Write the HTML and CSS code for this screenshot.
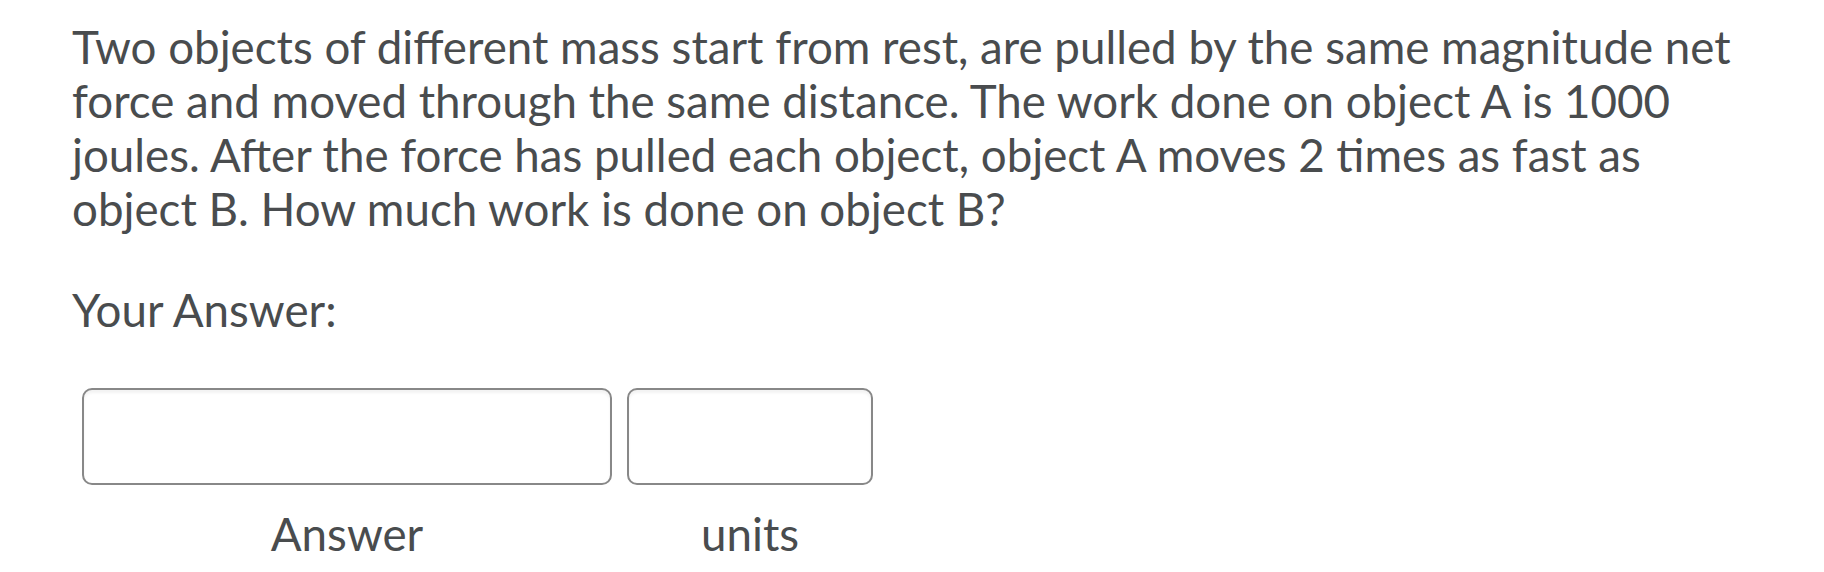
FILE: index.html
```html
<!DOCTYPE html>
<html lang="en">
<head>
    <meta charset="UTF-8">
    <title>Question</title>
    <link rel="stylesheet" href="styles.css">
</head>
<body>
    <div class="question">
        <p class="question-text">Two objects of different mass start from rest, are pulled by the same magnitude net force and moved through the same distance. The work done on object A is 1000 joules. After the force has pulled each object, object A moves 2 times as fast as object B. How much work is done on object B?</p>

        <p class="answer-title">Your Answer:</p>

        <div class="fields">
            <div class="field field-answer">
                <input type="text" class="field-input" aria-label="Answer">
                <span class="field-label">Answer</span>
            </div>
            <div class="field field-units">
                <input type="text" class="field-input" aria-label="units">
                <span class="field-label">units</span>
            </div>
        </div>
    </div>
</body>
</html>
```

FILE: styles.css
```css
* {
    margin: 0;
    padding: 0;
    box-sizing: border-box;
}

body {
    font-family: Lato, "Open Sans", sans-serif;
    font-size: 45.7px;
    line-height: 54px;
    color: #494c4e;
    background: #fff;
}

.question {
    padding: 20px 0 0 72px;
}

.question-text {
    max-width: 1690px;
}

.answer-title {
    margin-top: 47px;
}

.fields {
    display: flex;
    gap: 15px;
    margin-top: 51px;
    margin-left: 10px;
}

.field {
    display: flex;
    flex-direction: column;
    align-items: center;
}

.field-answer { width: 530px; }
.field-units { width: 246px; }

.field-input {
    width: 100%;
    height: 97px;
    border: 2px solid #888;
    border-radius: 10px;
    background: #fff;
    box-shadow: inset 0 3px 3px rgba(0, 0, 0, 0.05);
    font: inherit;
    color: inherit;
    padding: 0 16px;
    outline: none;
}

.field-label {
    margin-top: 22px;
}
```
